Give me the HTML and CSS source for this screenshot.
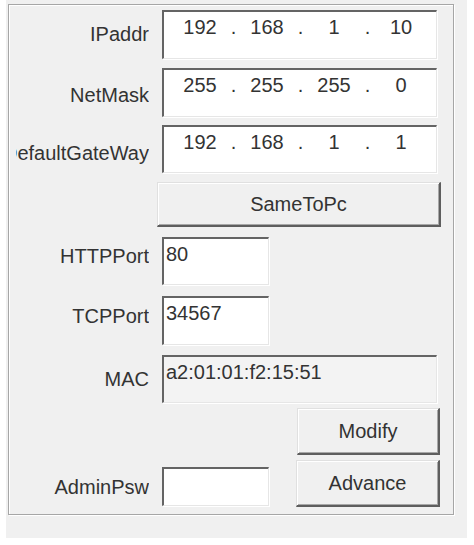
FILE: index.html
```html
<!DOCTYPE html>
<html>
<head>
<meta charset="utf-8">
<link rel="stylesheet" href="styles.css">
</head>
<body>
<div class="window">
  <div class="group">
    <div class="row r1">
      <div class="label"><span>IPaddr</span></div>
      <div class="field ip"><span class="seg">192</span><span class="dot">.</span><span class="seg">168</span><span class="dot">.</span><span class="seg">1</span><span class="dot">.</span><span class="seg">10</span></div>
    </div>
    <div class="row r2">
      <div class="label"><span>NetMask</span></div>
      <div class="field ip"><span class="seg">255</span><span class="dot">.</span><span class="seg">255</span><span class="dot">.</span><span class="seg">255</span><span class="dot">.</span><span class="seg">0</span></div>
    </div>
    <div class="row r3">
      <div class="label"><span>DefaultGateWay</span></div>
      <div class="field ip"><span class="seg">192</span><span class="dot">.</span><span class="seg">168</span><span class="dot">.</span><span class="seg">1</span><span class="dot">.</span><span class="seg">1</span></div>
    </div>
    <div class="row r4">
      <button class="btn same">SameToPc</button>
    </div>
    <div class="row r5">
      <div class="label"><span>HTTPPort</span></div>
      <div class="field short">80</div>
    </div>
    <div class="row r6">
      <div class="label"><span>TCPPort</span></div>
      <div class="field short">34567</div>
    </div>
    <div class="row r7">
      <div class="label"><span>MAC</span></div>
      <div class="field ro">a2:01:01:f2:15:51</div>
    </div>
    <div class="row r8">
      <button class="btn modify">Modify</button>
    </div>
    <div class="row r9">
      <div class="label"><span>AdminPsw</span></div>
      <div class="field short admin"></div>
      <button class="btn advance">Advance</button>
    </div>
  </div>
</div>
</body>
</html>
```
FILE: styles.css
```css
html, body {
  margin: 0;
  padding: 0;
  background: #ffffff;
}
body {
  font-family: "Liberation Sans", Arial, sans-serif;
  font-size: 20px;
  color: #333333;
}
.window {
  margin-left: 6px;
  width: 461px;
  height: 538px;
  background: #f0f0f0;
  padding-top: 4px;
  padding-left: 2px;
  box-sizing: border-box;
}
.group {
  width: 446px;
  height: 511px;
  box-sizing: border-box;
  border: 1px solid #a6a6a6;
  box-shadow: inset 1px 1px 0 #ffffff, 1px 1px 0 #ffffff;
  display: flex;
  flex-direction: column;
}
.row {
  display: flex;
  align-items: center;
  flex-shrink: 0;
}
.r1 { margin-top: 5px; height: 49px; }
.r2 { margin-top: 9px; height: 49px; }
.r3 { margin-top: 8px; height: 48px; }
.r4 { margin-top: 9px; height: 45px; }
.r5 { margin-top: 10px; height: 48px; }
.r6 { margin-top: 11px; height: 49px; }
.r7 { margin-top: 10px; height: 48px; }
.r8 { margin-top: 5px; height: 47px; }
.r9 { margin-top: 5px; height: 47px; align-items: flex-start; }

.label {
  width: 133px;
  margin-left: 7px;
  margin-right: 13px;
  display: flex;
  justify-content: flex-end;
  overflow: hidden;
  white-space: nowrap;
  align-self: center;
}
.label span {
  flex-shrink: 0;
}
.r2 .label { margin-top: 6px; }
.r3 .label { margin-top: 8px; }
.r5 .label { margin-top: -10px; }
.r6 .label { margin-top: -8px; }
.r9 .label { margin-top: 8px; }

.field {
  box-sizing: border-box;
  height: 100%;
  width: 275px;
  background: #ffffff;
  border-top: 2px solid #646464;
  border-left: 2px solid #646464;
  border-bottom: 1px solid #e6e6e6;
  border-right: 1px solid #e6e6e6;
  box-shadow: 1px 1px 0 #ffffff;
  padding: 5px 2px 0 2px;
  line-height: 20px;
  white-space: nowrap;
}
.field.ip {
  display: flex;
  padding-left: 8px;
}
.seg {
  width: 56px;
  text-align: center;
}
.dot {
  width: 11px;
  text-align: center;
}
.field.short {
  width: 107px;
}
.field.ro {
  background: #f3f3f3;
}
.field.admin {
  height: 39px;
  margin-top: 7px;
}

.btn {
  box-sizing: border-box;
  height: 100%;
  font-family: "Liberation Sans", Arial, sans-serif;
  font-size: 20px;
  color: #333333;
  background: #f0f0f0;
  border-top: 1px solid #e0e0e0;
  border-left: 1px solid #e0e0e0;
  border-bottom: 2px solid #5e5e5e;
  border-right: 2px solid #5e5e5e;
  box-shadow: inset 1px 1px 0 #ffffff, inset -1px -1px 0 #a8a8a8;
  padding: 0;
  line-height: 20px;
}
.btn.same {
  margin-left: 148px;
  width: 284px;
}
.btn.modify {
  margin-left: 288px;
  width: 143px;
}
.btn.advance {
  margin-left: 27px;
  width: 144px;
}
```
